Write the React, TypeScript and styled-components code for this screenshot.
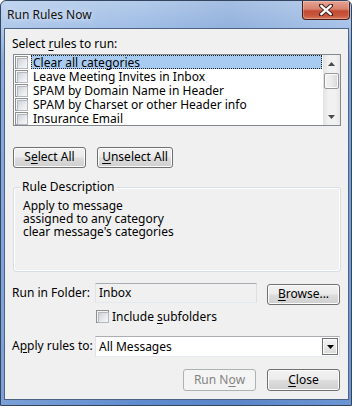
import React from "react";
import styled, { createGlobalStyle } from "styled-components";

const Global = createGlobalStyle`
  html, body { margin: 0; padding: 0; background: #ffffff; }
  body {
    font-family: "Noto Sans", "Open Sans", sans-serif;
    font-size: 12px;
    color: #000;
  }
  * { box-sizing: border-box; }
`;

const Window = styled.div`
  width: 352px;
  height: 406px;
  border: 1px solid #34465f;
  border-radius: 6px 6px 0 0;
  background:
    linear-gradient(90deg, rgba(255,255,255,0.18) 0%, rgba(255,255,255,0) 40%, rgba(40,80,150,0.10) 65%, rgba(255,255,255,0.08) 100%),
    linear-gradient(180deg, #b3cbea 0px, #9fbde6 27px, #6f9ad6 60px, #5f8ccf 100%);
  display: flex;
  flex-direction: column;
  padding: 0 2px 5px 3px;
  overflow: hidden;
`;

const TitleBar = styled.div`
  height: 27px;
  display: flex;
  align-items: flex-start;
  justify-content: space-between;
`;

const Title = styled.div`
  padding: 6px 0 0 3px;
  font-size: 12px;
  line-height: 16px;
  color: #111;
  text-shadow: 0 0 6px rgba(255,255,255,0.9);
`;

const CloseBtn = styled.div`
  width: 48px;
  height: 19px;
  margin-right: -1px;
  border: 1px solid #4c1d18;
  border-top: none;
  border-radius: 0 0 4px 4px;
  background: linear-gradient(180deg, #e6a394 0%, #d8826f 45%, #c24b33 55%, #c8553c 80%, #d77a5c 100%);
  box-shadow: inset 0 0 0 1px rgba(255,255,255,0.25);
  display: flex;
  align-items: center;
  justify-content: center;
`;

const Client = styled.div`
  flex: 1;
  border: 1px solid #4b6385;
  background: #f0f0f0;
  display: flex;
  flex-direction: column;
  padding: 0 7px 0 8px;
`;

const SectionLabel = styled.div`
  margin-top: 7px;
  height: 16px;
  line-height: 16px;
  margin-left: -1px;
`;

const U = styled.span`
  text-decoration: underline;
  text-underline-offset: 2px;
`;

const ListBox = styled.div`
  margin-top: 2px;
  height: 72px;
  border: 1px solid #828790;
  background: #fff;
  display: flex;
`;

const Rows = styled.div`
  flex: 1;
  display: flex;
  flex-direction: column;
  padding-right: 1px;
`;

const Row = styled.div`
  height: 14px;
  display: flex;
  align-items: center;
  padding-left: 1px;
`;

const RowText = styled.div<{ $selected?: boolean }>`
  margin-left: 3px;
  flex: ${(p) => (p.$selected ? 1 : "0 1 auto")};
  height: 14px;
  line-height: 13px;
  padding-left: 1px;
  white-space: nowrap;
  background: ${(p) => (p.$selected ? "#a8ccf1" : "transparent")};
  border: 1px ${(p) => (p.$selected ? "dotted #222" : "solid transparent")};
`;

const Check = styled.div`
  width: 13px;
  height: 13px;
  flex: none;
  border: 1px solid #8e8f8f;
  background: #f4f4f4;
  padding: 1px;
  &::after {
    content: "";
    display: block;
    width: 9px;
    height: 9px;
    border: 1px solid #b4b9bf;
    background: linear-gradient(135deg, #cdd1d6 0%, #e9ebee 60%, #f7f7f7 100%);
  }
`;

const ScrollBar = styled.div`
  width: 17px;
  flex: none;
  background: linear-gradient(90deg, #e2e2e2 0%, #f1f1f1 30%, #f1f1f1 75%, #e6e6e6 100%);
  display: flex;
  flex-direction: column;
  align-items: center;
`;

const ArrowBox = styled.div`
  width: 17px;
  height: 17px;
  flex: none;
  display: flex;
  align-items: center;
  justify-content: center;
`;

const Thumb = styled.div`
  width: 15px;
  height: 16px;
  margin-top: 1px;
  border: 1px solid #979797;
  border-radius: 2px;
  background: linear-gradient(90deg, #f2f2f2 0%, #ebebeb 50%, #d6d6d6 100%);
  box-shadow: inset 0 0 0 1px #fbfbfb;
`;

const Spacer = styled.div`
  flex: 1;
`;

const ButtonRow = styled.div<{ $top: number; $end?: boolean }>`
  margin-top: ${(p) => p.$top}px;
  display: flex;
  gap: 11px;
  justify-content: ${(p) => (p.$end ? "flex-end" : "flex-start")};
  padding-right: ${(p) => (p.$end ? 1 : 0)}px;
`;

const Button = styled.div<{ $w: number; $h?: number; $disabled?: boolean }>`
  width: ${(p) => p.$w}px;
  height: ${(p) => p.$h ?? 21}px;
  flex: none;
  border: 1px solid ${(p) => (p.$disabled ? "#adb2b5" : "#707070")};
  border-radius: 3px;
  background: ${(p) =>
    p.$disabled
      ? "#f4f4f4"
      : "linear-gradient(180deg, #f2f2f2 0%, #ebebeb 48%, #dddddd 52%, #cfcfcf 100%)"};
  box-shadow: inset 0 0 0 1px ${(p) => (p.$disabled ? "#f4f4f4" : "#fcfcfc")};
  color: ${(p) => (p.$disabled ? "#838383" : "#000")};
  display: flex;
  align-items: center;
  justify-content: center;
  line-height: 14px;
  padding-bottom: 1px;
`;

const Group = styled.div`
  position: relative;
  margin-top: 19px;
  height: 85px;
  border: 1px solid #d5dfe5;
  border-radius: 3px;
  box-shadow: inset 0 0 0 1px #fff;
  padding: 11px 0 0 9px;
`;

const Legend = styled.div`
  position: absolute;
  top: -9px;
  left: 6px;
  padding: 0 2px;
  background: #f0f0f0;
  line-height: 16px;
`;

const DescLine = styled.div`
  line-height: 13px;
  height: 13px;
`;

const FieldRow = styled.div<{ $top: number }>`
  margin-top: ${(p) => p.$top}px;
  display: flex;
  align-items: flex-start;
  padding-right: 1px;
`;

const FieldLabel = styled.div`
  width: 82px;
  flex: none;
  margin-left: -1px;
  margin-right: 1px;
  line-height: 20px;
`;

const TextBox = styled.div`
  width: 162px;
  height: 20px;
  border: 1px solid #abadb3;
  border-color: #abadb3 #dbdfe6 #e3e9ef #e2e3ea;
  background: #f0f0f0;
  padding-left: 3px;
  line-height: 17px;
`;

const Gap = styled.div<{ $w: number }>`
  width: ${(p) => p.$w}px;
  flex: none;
`;

const ButtonSlot = styled.div`
  padding-top: 1px;
`;

const CheckRow = styled.div`
  margin-top: 5px;
  padding-left: 83px;
  display: flex;
  align-items: center;
  height: 13px;
`;

const CheckLabel = styled.div`
  margin-left: 3px;
  line-height: 14px;
`;

const Select = styled.div`
  flex: 1;
  height: 21px;
  border: 1px solid #abadb3;
  border-color: #abadb3 #dbdfe6 #e3e9ef #e2e3ea;
  background: #fff;
  display: flex;
  align-items: center;
  padding: 0 1px 0 3px;
`;

const SelectText = styled.div`
  flex: 1;
  line-height: 16px;
`;

const DropBtn = styled.div`
  width: 16px;
  height: 17px;
  border: 1px solid #707070;
  background: linear-gradient(180deg, #f4f4f4 0%, #e8e8e8 50%, #d8d8d8 100%);
  box-shadow: inset 0 0 0 1px #fcfcfc;
  display: flex;
  align-items: center;
  justify-content: center;
`;

const rules = [
  "Clear all categories",
  "Leave Meeting Invites in Inbox",
  "SPAM by Domain Name in Header",
  "SPAM by Charset or other Header info",
  "Insurance Email",
];

export default function App() {
  return (
    <>
      <Global />
      <Window>
        <TitleBar>
          <Title>Run Rules Now</Title>
          <CloseBtn>
            <svg width="14" height="12" viewBox="0 0 14 12">
              <path d="M2 1.5 L12 10.5 M12 1.5 L2 10.5" stroke="#3b1c18" strokeWidth="4.2" strokeLinecap="round" />
              <path d="M2.3 1.8 L11.7 10.2 M11.7 1.8 L2.3 10.2" stroke="#ffffff" strokeWidth="2.4" strokeLinecap="round" />
            </svg>
          </CloseBtn>
        </TitleBar>
        <Client>
          <SectionLabel>
            Select <U>r</U>ules to run:
          </SectionLabel>
          <ListBox>
            <Rows>
              {rules.map((r, i) => (
                <Row key={r}>
                  <Check />
                  <RowText $selected={i === 0}>{r}</RowText>
                </Row>
              ))}
            </Rows>
            <ScrollBar>
              <ArrowBox>
                <svg width="7" height="4" viewBox="0 0 7 4">
                  <path d="M0 4 L3.5 0 L7 4 Z" fill="#4a4a4a" />
                </svg>
              </ArrowBox>
              <Thumb />
              <Spacer />
              <ArrowBox>
                <svg width="7" height="4" viewBox="0 0 7 4">
                  <path d="M0 0 L7 0 L3.5 4 Z" fill="#4a4a4a" />
                </svg>
              </ArrowBox>
            </ScrollBar>
          </ListBox>

          <ButtonRow $top={21}>
            <Button $w={73}>
              S<U>e</U>lect All
            </Button>
            <Button $w={76}>
              <U>U</U>nselect All
            </Button>
          </ButtonRow>

          <Group>
            <Legend>Rule Description</Legend>
            <DescLine>Apply to message</DescLine>
            <DescLine>assigned to any category</DescLine>
            <DescLine>clear message's categories</DescLine>
          </Group>

          <FieldRow $top={11}>
            <FieldLabel>Run in Folder:</FieldLabel>
            <TextBox>Inbox</TextBox>
            <Gap $w={10} />
            <ButtonSlot>
              <Button $w={73}>
                <U>B</U>rowse...
              </Button>
            </ButtonSlot>
          </FieldRow>

          <CheckRow>
            <Check />
            <CheckLabel>
              Include <U>s</U>ubfolders
            </CheckLabel>
          </CheckRow>

          <FieldRow $top={13}>
            <FieldLabel>
              A<U>p</U>ply rules to:
            </FieldLabel>
            <Select>
              <SelectText>All Messages</SelectText>
              <DropBtn>
                <svg width="7" height="4" viewBox="0 0 7 4">
                  <path d="M0 0 L7 0 L3.5 4 Z" fill="#000" />
                </svg>
              </DropBtn>
            </Select>
          </FieldRow>

          <ButtonRow $top={12} $end>
            <Button $w={73} $h={22} $disabled>
              Run N<U>o</U>w
            </Button>
            <Button $w={73} $h={22}>
              <U>C</U>lose
            </Button>
          </ButtonRow>
        </Client>
      </Window>
    </>
  );
}
